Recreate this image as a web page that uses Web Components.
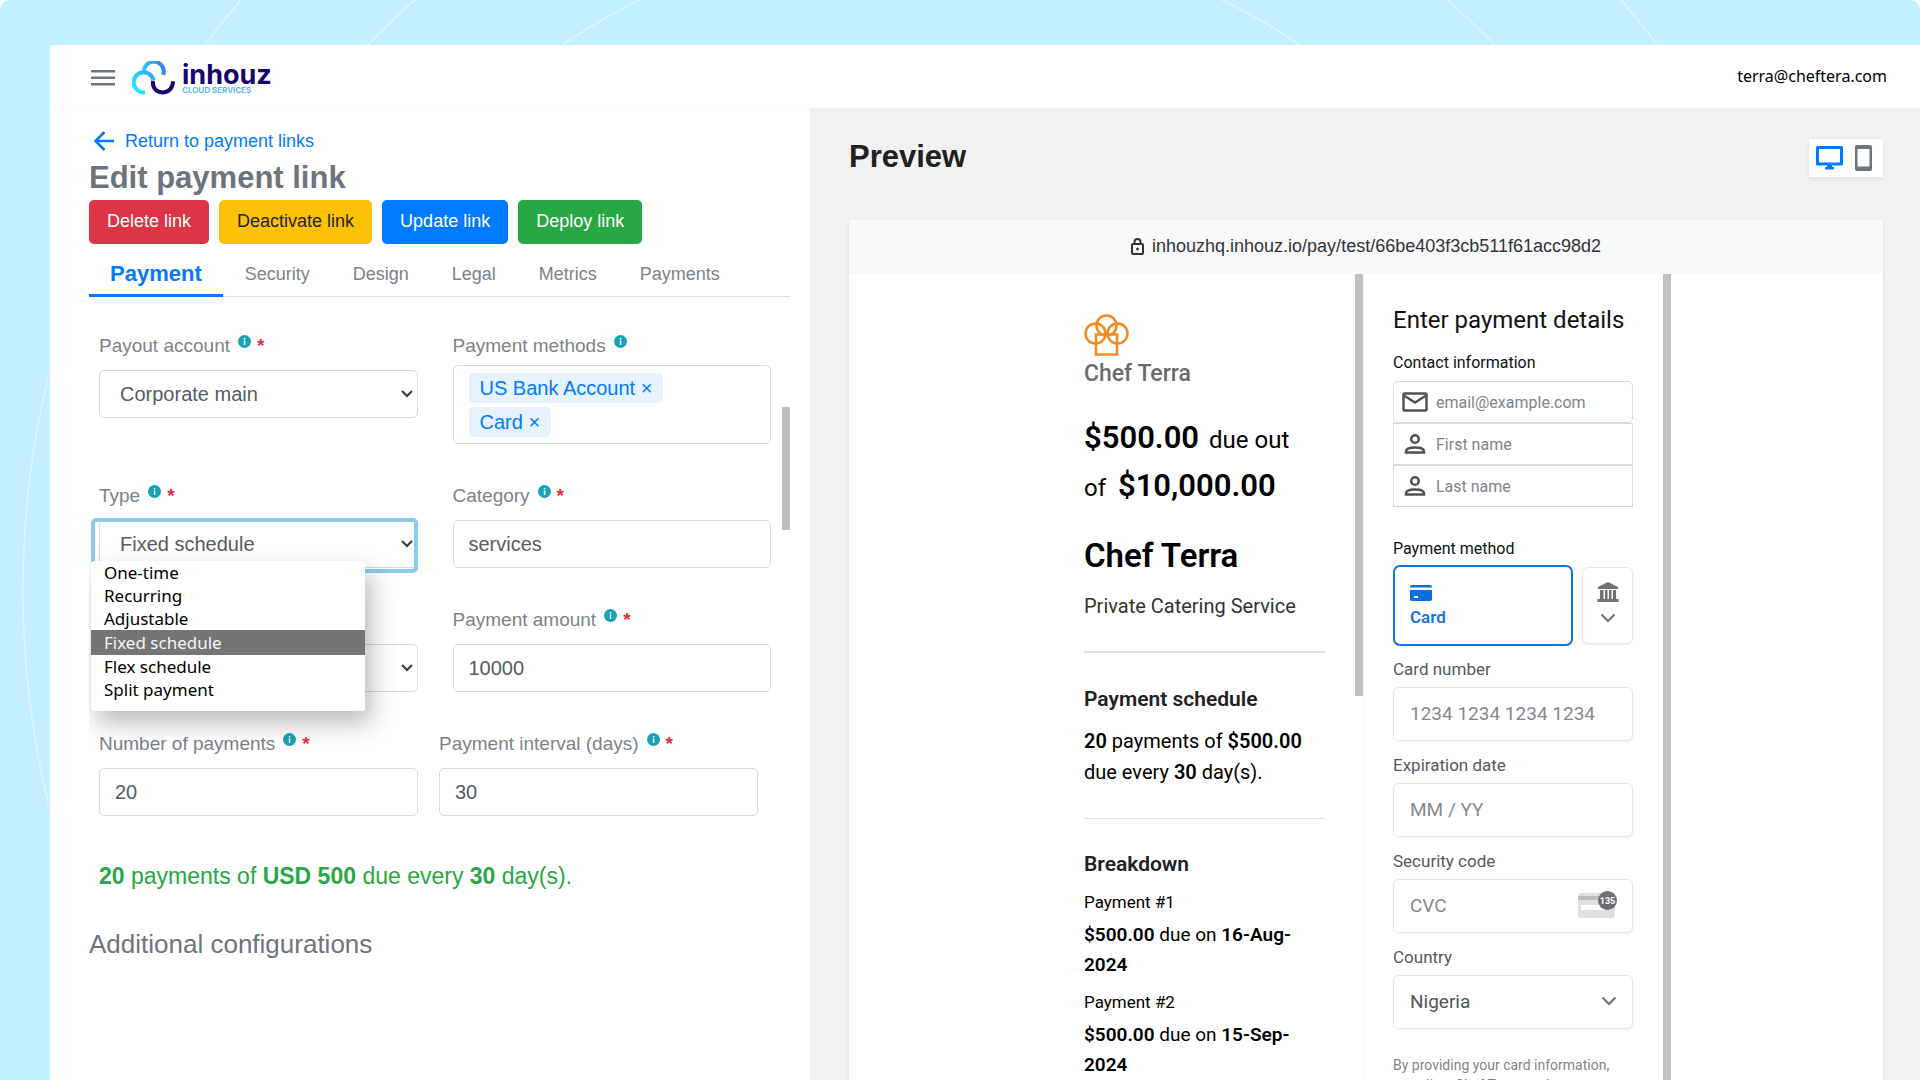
<!DOCTYPE html>
<html lang="en">
<head>
<meta charset="utf-8">
<title>Edit payment link</title>
<style>
    body{
        margin:0;
        background:#fff;
        font-family:"Liberation Sans", Arial, sans-serif;
    }
</style>
</head>
<body>
<app-shell>
    <app-header slot="header" email="terra@cheftera.com"></app-header>
    <link-editor slot="editor"></link-editor>
    <preview-pane slot="preview" url="inhouzhq.inhouz.io/pay/test/66be403f3cb511f61acc98d2">
        <order-summary></order-summary>
        <checkout-form></checkout-form>
    </preview-pane>
</app-shell>

<script>
const base = `
    *{ box-sizing:border-box; }
    h1,h2,h3,p,ul{ margin:0; padding:0; }
    svg{ display:block; flex:none; }
    button,input,select{ font:inherit; margin:0; }
`;

class AppShell extends HTMLElement{
    constructor(){
        super();
        this.attachShadow({mode: "open"}).innerHTML = `
        <style>
        ${base}
        :host{
            display:grid;
            position:relative;
            height:100vh;
            padding:45px 0 0 50px;
            overflow:hidden;
            border-radius:11px;
            background:#c3f0ff;
        }
        .rings{
            position:absolute;
            left:0;
            top:0;
            fill:none;
            stroke:#dcf7ff;
            stroke-width:1.5;
        }
        .app{
            position:relative;
            display:flex;
            flex-direction:column;
            min-height:0;
            background:#fff;
            border-top-left-radius:3px;
        }
        main{
            flex:1;
            min-height:0;
            display:grid;
            grid-template-columns:760fr 1110fr;
            grid-template-rows:minmax(0, 1fr);
        }
        </style>
        <svg class="rings" width="1920" height="1080" aria-hidden="true">
            <circle cx="931" cy="590" r="908"/>
            <circle cx="931" cy="590" r="784"/>
            <circle cx="931" cy="590" r="658"/>
        </svg>
        <div class="app">
            <slot name="header"></slot>
            <main>
                <slot name="editor"></slot>
                <slot name="preview"></slot>
            </main>
        </div>
        `
    }
}
customElements.define("app-shell", AppShell);

class AppHeader extends HTMLElement{
    constructor(){
        super();
        this.attachShadow({mode: "open"}).innerHTML = `
        <style>
        ${base}
        :host{
            display:flex;
            align-items:center;
            height:62px;
            padding:0 33px 0 41px;
            border-bottom:1px solid #f8f9fa;
        }
        button{
            margin-top:4px;
            padding:0;
            border:0;
            background:none;
        }
        .brand{
            display:flex;
            align-items:center;
            gap:7px;
            margin:4px 0 0 17px;
            flex:1;
        }
        .words{
            display:flex;
            flex-direction:column;
            font-family:Inter, sans-serif;
        }
        .name{
            font-size:27px;
            line-height:26px;
            font-weight:700;
            color:#16056b;
        }
        .tag{
            margin-top:-3px;
            font-size:8px;
            line-height:10px;
            font-weight:600;
            color:#4fb4f7;
        }
        .email{
            font-family:"Noto Sans", sans-serif;
            font-size:16px;
            color:#000;
        }
        </style>
        <button aria-label="Menu">
            <svg width="24" height="16" fill="#6f777e"><path d="M0 0h24v2.500H0zM0 6.500h24V9H0zM0 13h24v2.500H0z"/></svg>
        </button>
        <div class="brand">
            <svg width="43" height="34" viewBox="0 0 43 34" fill="none" stroke-width="4">
                <defs>
                    <linearGradient id="sky" x1="0" y1="0" x2="1" y2="0"><stop stop-color="#2cc0ff"/><stop offset="1" stop-color="#2f86f6"/></linearGradient>
                    <linearGradient id="aqua" x1="0" y1="1" x2="1" y2="0"><stop stop-color="#1df4ff"/><stop offset="1" stop-color="#35a6fb"/></linearGradient>
                </defs>
                <path stroke="url(#sky)" d="M12 12.500a10 10 0 1 1 19.300 1.300"/>
                <path stroke="url(#aqua)" d="M13 31.300A10 10 0 1 1 21.500 19.500"/>
                <path stroke="#1a0a70" d="M21 20c-1 7 4 11.500 9.500 11.500c6 0 10.500-4.500 10.500-11.300"/>
            </svg>
            <div class="words">
                <span class="name">inhouz</span>
                <span class="tag">CLOUD SERVICES</span>
            </div>
        </div>
        <span class="email">${this.getAttribute("email")}</span>
        `
    }
}
customElements.define("app-header", AppHeader);

// one label + control of the editor form
class FormField extends HTMLElement{
    constructor(){
        super();
        const label = this.getAttribute("label")
        const value = this.getAttribute("value")
        const kind = this.getAttribute("kind") || "input"
        let control = `<input id="control" type="text" value="${value}">`
        if (kind === "select") {
            control = `
            <div class="select">
                <select id="control"><option>${value}</option></select>
                <svg width="12" height="8" fill="none" stroke="#343a40" stroke-width="2"><path d="M1 1l5 5 5-5"/></svg>
                <slot></slot>
            </div>`
        }
        if (kind === "tags") {
            control = `<div class="tags" id="control" role="group" aria-labelledby="label">${
                value.split(",").map(t => `<button type="button">${t} ×</button>`).join("")
            }</div>`
        }
        this.attachShadow({mode: "open"}).innerHTML = `
        <style>
        ${base}
        :host{
            display:flex;
            flex-direction:column;
            gap:12px;
            min-width:0;
        }
        :host([kind="tags"]){
            gap:7px;
        }
        .head{
            display:flex;
            height:24px;
            font-size:19px;
            line-height:24px;
            color:#7b838b;
        }
        .head svg{
            margin:1px 6px 0 8px;
        }
        .head b{
            color:#e0303f;
        }
        input,select{
            width:100%;
            height:48px;
            padding:0 15px;
            border:1px solid #d6dae0;
            border-radius:5px;
            background:#fff;
            color:#555c63;
            font-size:20px;
            outline:none;
        }
        select{
            appearance:none;
            padding-left:20px;
            grid-area:1 / 1;
        }
        .select{
            display:grid;
            align-items:center;
            position:relative;
        }
        .select > svg{
            grid-area:1 / 1;
            justify-self:end;
            margin-right:5px;
        }
        :host([open]) .select::after{
            content:"";
            position:absolute;
            inset:-2px 0 -5px -8px;
            border:4px solid #8ccbeb;
            border-radius:5px;
        }
        .tags{
            display:flex;
            flex-direction:column;
            align-items:flex-start;
            gap:4px;
            padding:7px 15px 6px;
            border:1px solid #d6dae0;
            border-radius:5px;
        }
        .tags button{
            height:30px;
            padding:0 11px;
            border:0;
            border-radius:5px;
            background:#e6f2ff;
            color:#007bff;
            font-size:20px;
        }
        </style>
        <div class="head">
            <label id="label" for="control">${label}</label>
            <svg width="13" height="13"><circle cx="6.500" cy="6.500" r="6.500" fill="#17a2b8"/><path d="M5.800 3h1.500v1.500H5.800zM5.800 5.500h1.500V10H5.800z" fill="#fff"/></svg>
            ${this.hasAttribute("required") ? "<b>*</b>" : ""}
        </div>
        ${control}
        `
    }
}
customElements.define("form-field", FormField);

// open list under a select
class OptionMenu extends HTMLElement{
    constructor(){
        super();
        const selected = this.getAttribute("selected")
        this.attachShadow({mode: "open"}).innerHTML = `
        <style>
        ${base}
        :host{
            position:absolute;
            z-index:2;
            top:41px;
            left:-8px;
            width:274px;
            padding-bottom:10px;
            border-radius:3px;
            background:#fff;
            box-shadow:6px 12px 26px rgba(0,0,0,.28);
            font-family:"Noto Sans", sans-serif;
            font-size:17px;
            line-height:23px;
            color:#000;
        }
        li{
            list-style:none;
            padding:0 13px;
        }
        li[aria-selected="true"]{
            padding:1px 13px;
            background:#757575;
            color:#f4f4f4;
        }
        </style>
        <ul role="listbox">
            ${this.getAttribute("options").split(",").map(o => `<li role="option" aria-selected="${o === selected}">${o}</li>`).join("")}
        </ul>
        `
    }
}
customElements.define("option-menu", OptionMenu);

class LinkEditor extends HTMLElement{
    constructor(){
        super();
        this.attachShadow({mode: "open"}).innerHTML = `
        <style>
        ${base}
        :host{
            display:flex;
            flex-direction:column;
            min-width:0;
            min-height:0;
            padding:21px 20px 0 39px;
        }
        .back{
            align-self:flex-start;
            display:flex;
            align-items:center;
            gap:11px;
            margin:0 0 6px 5px;
            font-size:18px;
            line-height:24px;
            color:#007bff;
            text-decoration:none;
        }
        h1{
            font-size:31px;
            line-height:38px;
            color:#6c757d;
        }
        .actions{
            display:flex;
            gap:10px;
            margin-top:3px;
        }
        .actions button{
            height:44px;
            padding:0 18px 2px;
            border:0;
            border-radius:5px;
            font-size:18px;
            color:#fff;
        }
        .delete{ background:#dc3545; }
        .actions .deactivate{ background:#ffc107; color:#212529; }
        .update{ background:#007bff; }
        .deploy{ background:#28a745; }
        nav{
            display:flex;
            gap:1px;
            height:43px;
            margin-top:10px;
            box-shadow:inset 0 -1px #dee2e6;
        }
        nav a{
            padding:0 21px;
            line-height:40px;
            font-size:18px;
            color:#7b838b;
            text-decoration:none;
        }
        nav a[aria-current]{
            border-bottom:3px solid #007bff;
            font-size:22px;
            font-weight:bold;
            color:#007bff;
        }
        .scroll{
            flex:1;
            min-height:0;
            display:flex;
            overflow:hidden;
        }
        form{
            flex:1;
            min-width:0;
            padding-top:37px;
        }
        .grid,.pair{
            display:grid;
            grid-template-columns:1fr 1fr;
            gap:40px 35px;
            align-items:start;
            margin:0 11px 0 10px;
        }
        .pair{
            column-gap:21px;
            margin:40px 24px 0 10px;
        }
        .summary{
            margin:46px 10px 38px;
            font-size:23px;
            line-height:28px;
            color:#28a745;
        }
        h2{
            font-size:26px;
            line-height:32px;
            font-weight:400;
            color:#6c757d;
        }
        .thumb{
            width:8px;
            height:123px;
            margin-top:110px;
            background:#bfbfbf;
        }
        </style>
        <a class="back" href="#">
            <svg width="20" height="20" fill="none" stroke="#007bff" stroke-width="2.500"><path d="M10.500 1L1.500 10l9 9M1.500 10H20"/></svg>
            Return to payment links
        </a>
        <h1>Edit payment link</h1>
        <div class="actions">
            <button class="delete">Delete link</button>
            <button class="deactivate">Deactivate link</button>
            <button class="update">Update link</button>
            <button class="deploy">Deploy link</button>
        </div>
        <nav>
            <a href="#" aria-current="page">Payment</a>
            <a href="#">Security</a>
            <a href="#">Design</a>
            <a href="#">Legal</a>
            <a href="#">Metrics</a>
            <a href="#">Payments</a>
        </nav>
        <div class="scroll">
            <form>
                <div class="grid">
                    <form-field label="Payout account" kind="select" value="Corporate main" required></form-field>
                    <form-field label="Payment methods" kind="tags" value="US Bank Account,Card"></form-field>
                    <form-field label="Type" kind="select" value="Fixed schedule" required open>
                        <option-menu selected="Fixed schedule" options="One-time,Recurring,Adjustable,Fixed schedule,Flex schedule,Split payment"></option-menu>
                    </form-field>
                    <form-field label="Category" value="services" required></form-field>
                    <form-field label="Currency" kind="select" value="United States dollars (USD)" required></form-field>
                    <form-field label="Payment amount" value="10000" required></form-field>
                </div>
                <div class="pair">
                    <form-field label="Number of payments" value="20" required></form-field>
                    <form-field label="Payment interval (days)" value="30" required></form-field>
                </div>
                <p class="summary"><b>20</b> payments of <b>USD 500</b> due every <b>30</b> day(s).</p>
                <h2>Additional configurations</h2>
            </form>
            <div class="thumb"></div>
        </div>
        `
    }
}
customElements.define("link-editor", LinkEditor);

class PreviewPane extends HTMLElement{
    constructor(){
        super();
        this.attachShadow({mode: "open"}).innerHTML = `
        <style>
        ${base}
        :host{
            display:flex;
            flex-direction:column;
            min-width:0;
            min-height:0;
            padding:31px 37px 0 39px;
            background:#f1f1f1;
        }
        header{
            display:flex;
            align-items:center;
            justify-content:space-between;
            margin-bottom:43px;
        }
        h2{
            font-size:31px;
            line-height:36px;
            padding-bottom:2px;
            color:#212121;
        }
        .devices{
            display:flex;
            align-items:center;
            gap:12px;
            height:38px;
            padding:0 11px 0 7px;
            background:#fff;
            box-shadow:0 2px 5px rgba(0,0,0,.08);
        }
        .devices button{
            padding:0;
            border:0;
            background:none;
        }
        .window{
            flex:1;
            min-height:0;
            display:flex;
            flex-direction:column;
            border-radius:4px 4px 0 0;
            background:#fff;
            box-shadow:0 2px 5px rgba(0,0,0,.08);
            overflow:hidden;
        }
        .bar{
            display:flex;
            align-items:center;
            justify-content:center;
            gap:8px;
            height:54px;
            padding-bottom:2px;
            flex:none;
            background:#f8f9fb;
            font-size:18px;
            color:#333;
        }
        .page{
            flex:1;
            min-height:0;
            display:grid;
            grid-template-columns:302px 308px;
            grid-template-rows:minmax(0, 1fr);
            justify-content:center;
            font-family:Roboto, sans-serif;
        }
        </style>
        <header>
            <h2>Preview</h2>
            <div class="devices">
                <button aria-label="Desktop">
                    <svg width="27" height="24"><path d="M1.500 1.500h24v16.500h-24z" fill="none" stroke="#007bff" stroke-width="3" stroke-linejoin="round"/><path d="M11 18h5v3h2v2.500H9V21h2z" fill="#007bff"/></svg>
                </button>
                <button aria-label="Mobile">
                    <svg width="17" height="26"><path fill="#6c757d" fill-rule="evenodd" d="M2 0h13a2 2 0 0 1 2 2v22a2 2 0 0 1-2 2H2a2 2 0 0 1-2-2V2a2 2 0 0 1 2-2zM2.500 4v17.500h12V4z"/></svg>
                </button>
            </div>
        </header>
        <div class="window">
            <div class="bar">
                <svg width="13" height="17" fill="none" stroke="#333" stroke-width="2"><rect x="1" y="6" width="11" height="10" rx="1"/><path d="M3.500 6V4a3 3 0 0 1 6 0v2"/><circle cx="6.500" cy="11" r="1" fill="#333" stroke-width="1"/></svg>
                <span>${this.getAttribute("url")}</span>
            </div>
            <div class="page"><slot></slot></div>
        </div>
        `
    }
}
customElements.define("preview-pane", PreviewPane);

class OrderSummary extends HTMLElement{
    constructor(){
        super();
        this.attachShadow({mode: "open"}).innerHTML = `
        <style>
        ${base}
        :host{
            display:flex;
            justify-content:space-between;
            min-height:0;
            overflow:hidden;
            padding-left:23px;
            color:#000;
        }
        .body{
            width:241px;
            padding-top:40px;
        }
        .thumb{
            width:8px;
            height:422px;
            background:#c1c1c1;
        }
        .brand{
            margin:4px 0 28px;
            font-size:23px;
            line-height:28px;
            font-weight:500;
            color:#6b6b6b;
        }
        .amount{
            font-size:24px;
            line-height:48px;
        }
        .amount b{
            margin-right:4px;
            font-size:31px;
            line-height:31px;
        }
        h2{
            margin:24px 0 18px;
            font-size:33px;
            line-height:40px;
            font-weight:600;
        }
        .about{
            font-size:20px;
            line-height:24px;
            color:#333;
        }
        hr{
            margin:33px 0 34px;
            border:0;
            height:2px;
            background:#e0e0e0;
        }
        hr.thin{
            margin:30px 0 33px;
            height:1px;
        }
        h3{
            font-size:21px;
            line-height:24px;
            font-weight:600;
            color:#212121;
        }
        .plan{
            margin-top:15px;
            font-size:20px;
            line-height:31px;
        }
        .no{
            margin:10px 0 6px;
            font-size:17px;
            line-height:24px;
        }
        h3 + .no{
            margin-top:14px;
        }
        .due{
            font-size:19px;
            line-height:30px;
        }
        b{
            font-weight:600;
        }
        </style>
        <div class="body">
            <svg width="45" height="42" viewBox="0 0 45 42" fill="none" stroke="#f28c1e" stroke-width="2.500">
                <circle cx="22.500" cy="11.500" r="10"/>
                <circle cx="11.500" cy="19.500" r="10"/>
                <circle cx="33.500" cy="19.500" r="10"/>
                <rect x="12" y="20.500" width="21" height="20"/>
            </svg>
            <p class="brand">Chef Terra</p>
            <p class="amount"><b>$500.00</b> due out<br>of&nbsp; <b>$10,000.00</b></p>
            <h2>Chef Terra</h2>
            <p class="about">Private Catering Service</p>
            <hr>
            <h3>Payment schedule</h3>
            <p class="plan"><b>20</b> payments of <b>$500.00</b> due every <b>30</b> day(s).</p>
            <hr class="thin">
            <h3>Breakdown</h3>
            <p class="no">Payment #1</p>
            <p class="due"><b>$500.00</b> due on <b>16-Aug-2024</b></p>
            <p class="no">Payment #2</p>
            <p class="due"><b>$500.00</b> due on <b>15-Sep-2024</b></p>
        </div>
        <div class="thumb"></div>
        `
    }
}
customElements.define("order-summary", OrderSummary);

const mailIcon = `<svg width="26" height="20" fill="none" stroke="#4d5258" stroke-width="2.500"><rect x="1.500" y="1.500" width="23" height="17" rx="1"/><path d="M2 3.500L13 10.500 24 3.500"/></svg>`
const userIcon = `<svg width="26" height="20" fill="none" stroke="#4d5258" stroke-width="2.500"><circle cx="13" cy="5" r="3.800"/><path d="M4 18.500v-1c0-2.500 4-4 9-4s9 1.500 9 4v1z"/></svg>`
const chevron = `<svg class="chevron" width="16" height="10" fill="none" stroke="#6d7278" stroke-width="2"><path d="M1.500 1.500L8 8l6.500-6.500"/></svg>`

class CheckoutForm extends HTMLElement{
    constructor(){
        super();
        this.attachShadow({mode: "open"}).innerHTML = `
        <style>
        ${base}
        :host{
            display:flex;
            min-height:0;
            overflow:hidden;
            border-left:1px solid #f6f6f6;
            color:#111;
        }
        form{
            flex:1;
            min-width:0;
            padding:32px 30px 0 29px;
        }
        .thumb{
            width:8px;
            background:#c1c1c1;
        }
        h2{
            margin-bottom:19px;
            font-size:24px;
            line-height:28px;
            font-weight:400;
        }
        h3,label{
            display:block;
            font-size:17px;
            line-height:20px;
            font-weight:400;
        }
        h3{
            font-size:16px;
        }
        .contact{
            margin:8px 0 32px;
        }
        .line{
            display:flex;
            align-items:center;
            height:42px;
            padding:0 8px;
            gap:8px;
            border:1px solid #d3dae0;
        }
        .line:first-child{
            border-radius:5px;
        }
        input,select{
            min-width:0;
            width:100%;
            padding:0;
            border:0;
            outline:none;
            background:none;
            appearance:none;
            color:inherit;
        }
        .line input{
            font-size:16px;
        }
        ::placeholder{
            color:#7f8388;
            opacity:1;
        }
        .methods{
            display:flex;
            align-items:center;
            gap:9px;
            margin:6px 0 13px;
        }
        .methods button{
            display:flex;
            flex-direction:column;
            justify-content:center;
            height:77px;
            background:#fff;
        }
        .methods .card{
            flex:1;
            align-items:flex-start;
            gap:6px;
            height:81px;
            padding:0 15px;
            border:2px solid #0f75e6;
            border-radius:7px;
            font-size:17px;
            line-height:20px;
            font-weight:600;
            color:#0f75e6;
        }
        .methods .more{
            align-items:center;
            gap:11px;
            width:51px;
            padding:0 0 6px;
            border:1px solid #e8e8ea;
            border-radius:6px;
            box-shadow:0 1px 2px rgba(0,0,0,.06);
        }
        .field label{
            margin-bottom:8px;
            color:#545960;
        }
        .field{
            margin-bottom:14px;
        }
        .box{
            display:flex;
            align-items:center;
            height:54px;
            padding:0 15px 2px 16px;
            border:1px solid #e4e5e8;
            border-radius:6px;
            box-shadow:0 1px 3px rgba(0,0,0,.05);
            font-size:19px;
            color:#50555b;
        }
        .box input::placeholder{
            color:#85898f;
        }
        .terms{
            margin-top:26px;
            font-size:14px;
            line-height:20px;
            color:#80858c;
        }
        </style>
        <form>
            <h2>Enter payment details</h2>
            <h3>Contact information</h3>
            <div class="contact">
                <div class="line">${mailIcon}<input type="email" aria-label="Email" placeholder="email@example.com"></div>
                <div class="line">${userIcon}<input type="text" aria-label="First name" placeholder="First name"></div>
                <div class="line">${userIcon}<input type="text" aria-label="Last name" placeholder="Last name"></div>
            </div>
            <h3>Payment method</h3>
            <div class="methods">
                <button type="button" class="card">
                    <svg width="22" height="16" fill="#0570de"><path d="M2 0h18a2 2 0 0 1 2 2v.500H0V2a2 2 0 0 1 2-2zM0 5h22v9a2 2 0 0 1-2 2H2a2 2 0 0 1-2-2z"/><path d="M4 11h4v2H4z" fill="#fff"/></svg>
                    Card
                </button>
                <button type="button" class="more" aria-label="US bank account">
                    <svg width="22" height="20" fill="#6d7278"><path d="M11 0l10 5v2H1V5zM3 8h3.500v9H3zM8 8h2.500v9H8zM12 8h2.500v9H12zM16 8h3v9h-3zM.500 17h21v3H.500z"/></svg>
                    ${chevron}
                </button>
            </div>
            <div class="field">
                <label for="number">Card number</label>
                <div class="box"><input id="number" type="text" placeholder="1234 1234 1234 1234"></div>
            </div>
            <div class="field">
                <label for="expiry">Expiration date</label>
                <div class="box"><input id="expiry" type="text" placeholder="MM / YY"></div>
            </div>
            <div class="field">
                <label for="cvc">Security code</label>
                <div class="box">
                    <input id="cvc" type="text" placeholder="CVC">
                    <svg width="39" height="28" viewBox="0 0 39 28">
                        <rect y="2" width="37" height="25" rx="3" fill="#e0e0e0"/>
                        <path d="M0 5h30v4H0z" fill="#bdbdbf"/>
                        <path d="M3 14h24v5H3z" fill="#fff"/>
                        <circle cx="29.500" cy="9.500" r="9.500" fill="#6d6e73"/>
                        <text x="29.500" y="13" text-anchor="middle" font-size="9" font-weight="700" fill="#fff">135</text>
                    </svg>
                </div>
            </div>
            <div class="field">
                <label for="country">Country</label>
                <div class="box">
                    <select id="country"><option>Nigeria</option></select>
                    ${chevron}
                </div>
            </div>
            <p class="terms">By providing your card information, you allow Chef Terra to charge your card.</p>
        </form>
        <div class="thumb"></div>
        `
    }
}
customElements.define("checkout-form", CheckoutForm);
</script>
</body>
</html>
